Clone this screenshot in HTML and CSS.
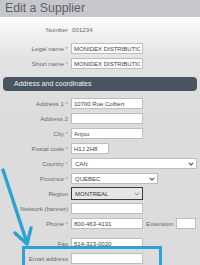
FILE: index.html
```html
<!DOCTYPE html>
<html lang="en">
  <head>
    <meta charset="UTF-8" />
    <title>Edit a Supplier</title>
    <link rel="stylesheet" href="styles.css">
  </head>
  <body>
    <h1 class="title">Edit a Supplier</h1>
    <form class="supplier">
      <div class="row number">
        <label>Number</label>
        <span class="value">001234</span>
      </div>
      <div class="row">
        <label>Legal name <b>*</b></label>
        <input class="field" type="text" value="MONIDEX DISTRIBUTION" />
      </div>
      <div class="row">
        <label>Short name <b>*</b></label>
        <input class="field" type="text" value="MONIDEX DISTRIBUTION" />
      </div>

      <div class="section">Address and coordinates</div>

      <div class="row">
        <label>Address 1 <b>*</b></label>
        <input class="field" type="text" value="10700 Rue Colbert" />
      </div>
      <div class="row">
        <label>Address 2</label>
        <input class="field" type="text" />
      </div>
      <div class="row">
        <label>City <b>*</b></label>
        <input class="field" type="text" value="Anjou" />
      </div>
      <div class="row">
        <label>Postal code <b>*</b></label>
        <input class="field short" type="text" value="H1J 2H8" />
      </div>
      <div class="row">
        <label>Country <b>*</b></label>
        <div class="select wide"><span>CAN</span>
          <svg width="6" height="4" viewBox="0 0 6 4"><path d="M0.8 0.8 L3 3 L5.2 0.8" fill="none" stroke="#555" stroke-width="1.1"/></svg>
        </div>
      </div>
      <div class="row">
        <label>Province <b>*</b></label>
        <div class="select mid"><span>QUEBEC</span>
          <svg width="6" height="4" viewBox="0 0 6 4"><path d="M0.8 0.8 L3 3 L5.2 0.8" fill="none" stroke="#555" stroke-width="1.1"/></svg>
        </div>
      </div>
      <div class="row">
        <label>Region</label>
        <div class="select locked"><span>MONTREAL</span>
          <svg width="6" height="4" viewBox="0 0 6 4"><path d="M0.8 0.8 L3 3 L5.2 0.8" fill="none" stroke="#aaa" stroke-width="1.1"/></svg>
        </div>
      </div>
      <div class="row">
        <label>Network (banner)</label>
        <input class="field" type="text" />
      </div>
      <div class="row">
        <label>Phone <b>*</b></label>
        <input class="field" type="text" value="800-463-4131" />
        <span class="ext">Extension</span>
        <input class="field tiny" type="text" />
      </div>
      <div class="row fax">
        <label>Fax</label>
        <input class="field" type="text" value="514-323-0020" />
      </div>
      <div class="row">
        <label>Email address</label>
        <input class="field" type="text" />
      </div>
    </form>

    <!-- callout over the email field -->
    <div class="highlight"></div>
    <svg class="arrow" width="40" height="90" viewBox="0 165 40 90">
      <g fill="none" stroke="#2ba3d5" stroke-width="3.4" stroke-linecap="round" stroke-linejoin="round">
        <path d="M3 170 L27 243" />
        <path d="M15 233 L27 244 L31 228" />
      </g>
    </svg>
  </body>
</html>
```

FILE: styles.css
```css
body {
  margin: 0;
  width: 200px;
  height: 265px;
  overflow: hidden;
  position: relative;
  font-family: "Liberation Sans", Arial, sans-serif;
  background: linear-gradient(#fcfcfc 17px, #e2e2e2 60px, #dcdcdc 120px);
}
.title {
  margin: 0;
  height: 17px;
  line-height: 17px;
  padding-left: 5px;
  background-color: #c6c7cc;
  color: #5b6068;
  font-size: 12.3px;
  font-weight: normal;
}
.supplier {
  padding-top: 5px;
}
.row {
  display: flex;
  align-items: center;
  height: 15px;
}
.row label {
  width: 68px;
  flex-shrink: 0;
  margin-right: 3px;
  text-align: right;
  font-size: 6.2px;
  color: #6a6a6a;
  white-space: nowrap;
}
.row label b {
  font-weight: normal;
  color: #d77;
}
.number {
  height: 14px;
  margin-bottom: 5px;
}
.value {
  margin-left: 1px;
  font-size: 6.2px;
  color: #6a6a6a;
}
.field {
  box-sizing: border-box;
  width: 72px;
  height: 11px;
  margin: 0;
  padding: 0 2px;
  border: 1px solid #bdbdbd;
  background-color: white;
  font-family: "Liberation Sans", Arial, sans-serif;
  font-size: 6px;
  color: #444;
  outline: none;
}
.short {
  width: 38px;
}
.tiny {
  width: 20px;
}
.ext {
  margin-left: 3px;
  width: 30px;
  font-size: 6.2px;
  color: #6a6a6a;
}
.section {
  margin: 6px 3px 5px 3px;
  height: 14px;
  line-height: 14px;
  padding-left: 11px;
  border-radius: 4px;
  background-color: #4a5561;
  color: #f2f2f2;
  font-size: 7px;
}
.select {
  box-sizing: border-box;
  display: flex;
  justify-content: space-between;
  align-items: center;
  width: 72px;
  height: 11px;
  padding: 0 2px 0 3px;
  border: 1px solid #bdbdbd;
  background-color: white;
  font-size: 6px;
  color: #444;
}
.wide {
  width: 126px;
}
.mid {
  width: 87px;
}
.locked {
  height: 13px;
  border-color: #3a3a3a;
  background-color: #e6e6e6;
  color: #333;
}
.fax {
  margin-top: 5px;
}
.highlight {
  position: absolute;
  left: 22px;
  top: 246px;
  width: 134px;
  height: 24px;
  border: 3px solid #2ba3d5;
}
.arrow {
  position: absolute;
  left: 0;
  top: 165px;
}
```
